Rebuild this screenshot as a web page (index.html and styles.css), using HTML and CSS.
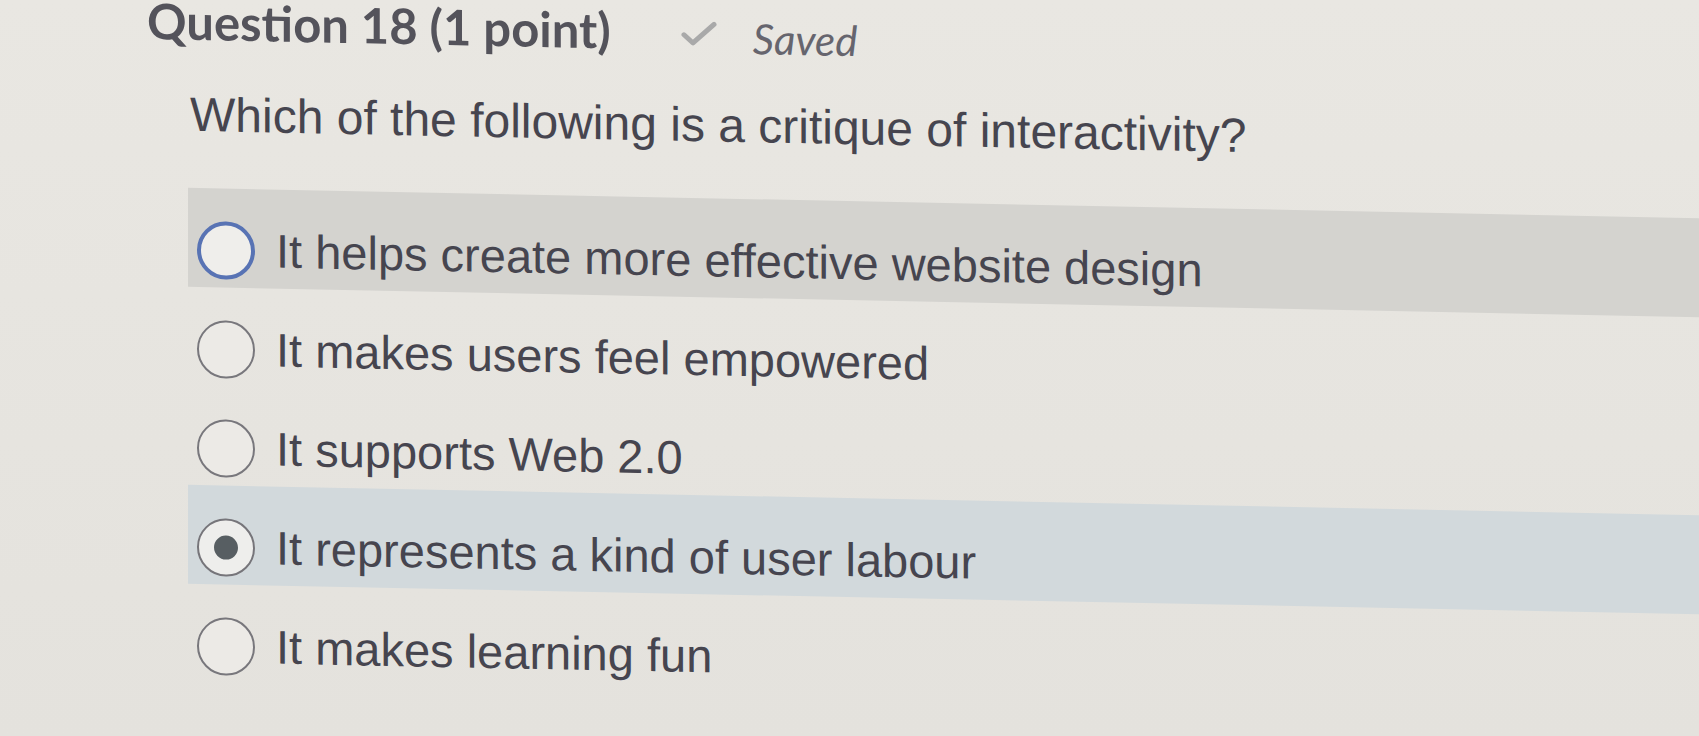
FILE: index.html
```html
<!DOCTYPE html>
<html lang="en">
<head>
  <meta charset="UTF-8" />
  <meta name="viewport" content="width=device-width, initial-scale=1.0"/>
  <title>Question 18</title>
  <link rel="stylesheet" href="styles.css">
</head>
<body>
  <div class="quiz">
    <div class="q-head">
      <h1>Question 18 (1 point)</h1>
      <span class="saved">
        <svg class="check" width="36" height="26" viewBox="0 0 36 26">
          <path d="M3 14 L12 22 L33 3" fill="none" stroke="#a9a9a9" stroke-width="5" stroke-linecap="round" stroke-linejoin="round"/>
        </svg>
        Saved
      </span>
    </div>

    <p class="prompt">Which of the following is a critique of interactivity?</p>

    <ul class="choices">
      <li class="choice hover"><span class="radio"></span>It helps create more effective website design</li>
      <li class="choice"><span class="radio"></span>It makes users feel empowered</li>
      <li class="choice"><span class="radio"></span>It supports Web 2.0</li>
      <li class="choice checked"><span class="radio"></span>It represents a kind of user labour</li>
      <li class="choice"><span class="radio"></span>It makes learning fun</li>
    </ul>
  </div>
</body>
</html>
```

FILE: styles.css
```css
html, body {
  margin: 0;
  height: 100%;
  overflow: hidden;
}
body {
  background: linear-gradient(to bottom, #e9e7e2, #e4e2dd);
  font-family: "Liberation Sans", Arial, sans-serif;
  color: #46454f;
}
.quiz {
  padding-left: 147px;
  transform: skewY(1.15deg);
  transform-origin: 147px 0;
}
.q-head {
  display: flex;
  align-items: center;
  height: 40px;
}
h1 {
  margin: 0;
  font-family: Lato, "Open Sans", sans-serif;
  font-weight: bold;
  font-size: 49px;
  line-height: 40px;
  color: #54535b;
}
.saved {
  display: flex;
  align-items: center;
  margin-left: 70px;
  font-family: Lato, "Open Sans", sans-serif;
  font-style: italic;
  font-size: 42px;
  color: #66656e;
  position: relative;
  top: 6px;
}
.check {
  margin-right: 36px;
  margin-top: -6px;
}
.prompt {
  margin: 44px 0 0 43px;
  font-size: 48px;
  line-height: 60px;
}
.choices {
  list-style: none;
  margin: 43px 0 0 41px;
  padding: 0;
  width: 1700px;
}
.choice {
  display: flex;
  align-items: center;
  gap: 21px;
  height: 99px;
  box-sizing: border-box;
  padding: 24px 0 0 9px;
  font-size: 47px;
}
.choice.hover {
  background: #d4d3cf;
}
.choice.checked {
  background: #d2d9dc;
}
.radio {
  flex: none;
  width: 58px;
  height: 58px;
  box-sizing: border-box;
  border: 2px solid #78777c;
  border-radius: 50%;
  background: #eceae6;
  display: flex;
  align-items: center;
  justify-content: center;
}
.hover .radio {
  border: 4px solid #5873b4;
  background: #efeeeb;
}
.checked .radio {
  border-color: #76757a;
  background: #eeeeec;
}
.checked .radio::after {
  content: "";
  width: 24px;
  height: 24px;
  border-radius: 50%;
  background: #575e62;
}
```
